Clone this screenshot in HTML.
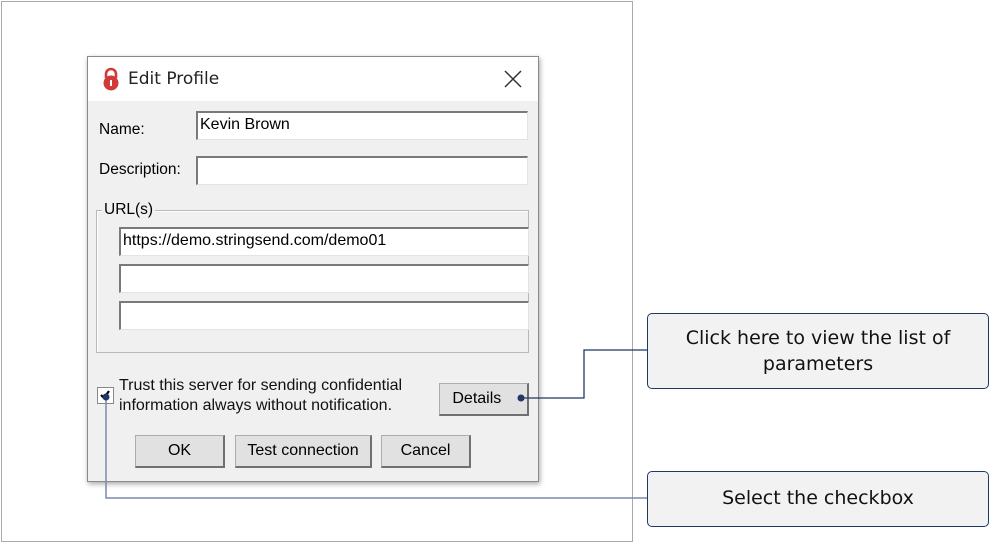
<!DOCTYPE html>
<html><head><meta charset="utf-8"><style>
*{margin:0;padding:0;box-sizing:border-box}
body{width:989px;height:543px;background:#fff;position:relative;overflow:hidden;font-family:"Liberation Sans",Arial,sans-serif;font-size:15.5px;color:#000}
.a{position:absolute}
.frame{left:1px;top:1px;width:632px;height:541px;border:1px solid #aaa}
.dlg{left:87px;top:56px;width:452px;height:426px;background:#f0f0f0;border:1px solid #8a8a8a;box-shadow:1px 2px 5px rgba(0,0,0,.35)}
.title{left:0;top:0;width:450px;height:44px;background:#fff}
.inp{background:#fff;border:1px solid #a0a0a0;border-top:2px solid #7a7a7a;border-left:2px solid #7a7a7a;border-right:1px solid #e3e3e3;border-bottom:1px solid #e3e3e3;padding:1px 2px;font-size:16px;line-height:22px}
.btn{background:#e1e1e1;border:1px solid #adadad;border-right:2px solid #707070;border-bottom:2px solid #707070;text-align:center;font-size:16px}
.call{background:#f2f2f2;border:1.5px solid #1f3864;border-radius:5px;text-align:center;font-family:"DejaVu Sans","Liberation Sans",sans-serif;font-size:19px;color:#111;line-height:26px}
</style></head><body>
<div class="a frame"></div>
<div class="a dlg">
 <div class="a title"></div>
 <svg class="a" style="left:12px;top:10px" width="22" height="24" viewBox="0 0 22 24"><path d="M6 11V7a5 5 0 0 1 10 0v4" fill="none" stroke="#d23a3a" stroke-width="2.6"/><circle cx="11" cy="16" r="7.5" fill="#d23a3a"/><rect x="10" y="13" width="2" height="6" fill="#fff"/></svg>
 <div class="a" style="left:40px;top:12px;font-family:'DejaVu Sans','Liberation Sans',sans-serif;font-size:17px;color:#222">Edit Profile</div>
 <svg class="a" style="left:416px;top:13px" width="18" height="18"><path d="M1 1L17 17M17 1L1 17" stroke="#333" stroke-width="1.5"/></svg>
 <div class="a" style="left:11px;top:64px">Name:</div>
 <div class="a inp" style="left:108px;top:54px;width:332px;height:29px">Kevin Brown</div>
 <div class="a" style="left:11px;top:104px">Description:</div>
 <div class="a inp" style="left:108px;top:99px;width:332px;height:29px"></div>
 <div class="a" style="left:8px;top:153px;width:433px;height:143px;border:1px solid #b8b8b8;box-shadow:inset 1px 1px 0 #fff"></div>
 <div class="a" style="left:14px;top:144px;background:#f0f0f0;padding:0 2px">URL(s)</div>
 <div class="a inp" style="left:31px;top:170px;width:410px;height:29px">https://demo.stringsend.com/demo01</div>
 <div class="a inp" style="left:31px;top:207px;width:410px;height:29px"></div>
 <div class="a inp" style="left:31px;top:244px;width:410px;height:29px"></div>
 <div class="a" style="left:9px;top:330px;width:17px;height:17px;background:#fff;border:1px solid #888"></div>
 <svg class="a" style="left:9px;top:330px" width="17" height="17"><path d="M4 8L7 11L12 4" fill="none" stroke="#000" stroke-width="2.2"/></svg>
 <div class="a" style="left:31px;top:319px;line-height:20px;font-size:16px;color:#111">Trust this server for sending confidential<br>information always without notification.</div>
 <div class="a btn" style="left:351px;top:326px;width:90px;height:33px;line-height:30px">Details&nbsp;&nbsp;&nbsp;</div>
 <div class="a btn" style="left:47px;top:378px;width:90px;height:33px;line-height:30px">OK</div>
 <div class="a btn" style="left:147px;top:378px;width:137px;height:33px;line-height:30px">Test connection</div>
 <div class="a btn" style="left:293px;top:378px;width:90px;height:33px;line-height:30px">Cancel</div>
</div>
<svg class="a" style="left:0;top:0" width="989" height="543">
 <polyline points="521,398 584,398 584,350 648,350" fill="none" stroke="#1f3864" stroke-width="1.3"/>
 <circle cx="521" cy="398" r="3.5" fill="#1f3864"/>
 <polyline points="106,397 106,498 648,498" fill="none" stroke="#7a8aaa" stroke-width="1.5"/>
 <circle cx="106" cy="397" r="3.5" fill="#1f3864"/>
</svg>
<div class="a call" style="left:647px;top:313px;width:342px;height:76px;padding-top:11px">Click here to view the list of<br>parameters</div>
<div class="a call" style="left:647px;top:471px;width:342px;height:56px;line-height:53px">Select the checkbox</div>
</body></html>
